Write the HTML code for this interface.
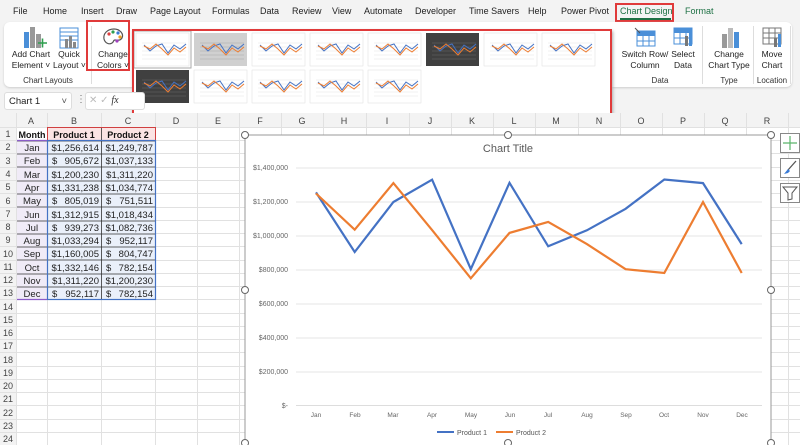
<!DOCTYPE html>
<html><head><meta charset="utf-8"><style>
*{margin:0;padding:0;box-sizing:border-box}
body{width:800px;height:445px;overflow:hidden;background:#fff;font-family:"Liberation Sans",sans-serif;position:relative}
.a{position:absolute}
.tab{position:absolute;top:6px;font-size:9px;color:#222}
.lbl{position:absolute;font-size:8.5px;color:#222;text-align:center;line-height:11px;white-space:nowrap}
.grp{position:absolute;font-size:8px;color:#333;text-align:center;white-space:nowrap}
</style></head><body>
<div class="a" style="left:0;top:0;width:800px;height:113px;background:#f3f3f3"></div>
<span class="tab" style="left:13px">File</span>
<span class="tab" style="left:43px">Home</span>
<span class="tab" style="left:81px">Insert</span>
<span class="tab" style="left:116px">Draw</span>
<span class="tab" style="left:150px">Page Layout</span>
<span class="tab" style="left:212px">Formulas</span>
<span class="tab" style="left:260px">Data</span>
<span class="tab" style="left:292px">Review</span>
<span class="tab" style="left:332px">View</span>
<span class="tab" style="left:364px">Automate</span>
<span class="tab" style="left:415px">Developer</span>
<span class="tab" style="left:469px">Time Savers</span>
<span class="tab" style="left:528px">Help</span>
<span class="tab" style="left:561px">Power Pivot</span>
<div class="a" style="left:615px;top:3px;width:59px;height:19px;border:2px solid #e03a3a"></div>
<span class="tab" style="left:620px;color:#1e7145">Chart Design</span>
<div class="a" style="left:620px;top:18px;width:51px;height:2px;background:#1e7145"></div>
<span class="tab" style="left:685px;color:#1e7145">Format</span>
<div class="a" style="left:4px;top:22px;width:788px;height:65px;background:#fff;border-radius:6px;box-shadow:0 1px 2px #ccc"></div>
<svg class="a" style="left:20px;top:26px" width="30" height="24"><rect x="4" y="6" width="5" height="16" fill="#4a8fd8"/><rect x="10" y="1" width="5" height="21" fill="#999"/><rect x="16" y="8" width="5" height="14" fill="#999"/><path d="M18 17h9M22.5 12.5v9" stroke="#2e9e4e" stroke-width="1.6"/></svg>
<div class="lbl" style="left:7px;top:49px;width:48px">Add Chart<br>Element ˅</div>
<svg class="a" style="left:58px;top:26px" width="24" height="24"><rect x="2" y="2" width="18" height="20" fill="#fff" stroke="#4a8fd8"/><path d="M2 6h18M2 10h18M2 14h18" stroke="#4a8fd8"/><rect x="7" y="13" width="3" height="9" fill="#888"/><rect x="11" y="10" width="3" height="12" fill="#888"/><rect x="15" y="16" width="3" height="6" fill="#888"/></svg>
<div class="lbl" style="left:53px;top:49px;width:32px">Quick<br>Layout ˅</div>
<div class="grp" style="left:8px;top:76px;width:80px">Chart Layouts</div>
<div class="a" style="left:91px;top:26px;width:1px;height:58px;background:#ddd"></div>
<div class="a" style="left:86px;top:20px;width:44px;height:51px;border:2px solid #e03a3a"></div>
<svg class="a" style="left:101px;top:27px" width="26" height="20"><path d="M13 2C6 2 2 7 3 12c1 4 5 6 8 4 2-1 1-3 3-3 3 0 5 1 7-2 2-4-2-9-8-9z" fill="#fff" stroke="#555" stroke-width="1.2"/><circle cx="8" cy="7" r="1.6" fill="#e04040"/><circle cx="12" cy="5" r="1.6" fill="#2e9e4e"/><circle cx="17" cy="6" r="1.6" fill="#3a7bd5"/><circle cx="19" cy="10" r="1.6" fill="#f0a020"/><circle cx="16" cy="14" r="1.6" fill="#a040c0"/></svg>
<div class="lbl" style="left:93px;top:49px;width:40px">Change<br>Colors ˅</div>
<div class="a" style="left:132px;top:29px;width:480px;height:87px;background:#fff;border:2px solid #e03a3a;box-shadow:1px 2px 3px #aaa"></div>
<svg class="a" style="left:134px;top:31px" width="476" height="83">
<defs>
<g id="t"><rect width="53" height="33" fill="#fff" stroke="#ddd" stroke-width=".5"/><path d="M6 10h44M6 14h44M6 18h44M6 22h44M6 26h44" stroke="#e4e4e4" stroke-width=".5"/><polyline points="8,12 14,18 20,13 26,11 32,20 38,12 44,16 50,11" fill="none" stroke="#4472c4" stroke-width="1"/><polyline points="8,13 14,16 20,11 26,16 32,22 38,15 44,19 50,14" fill="none" stroke="#ed7d31" stroke-width="1"/></g>
<g id="d"><rect width="53" height="33" fill="#404040"/><path d="M6 10h44M6 14h44M6 18h44M6 22h44M6 26h44" stroke="#666" stroke-width=".5"/><polyline points="8,12 14,18 20,13 26,11 32,20 38,12 44,16 50,11" fill="none" stroke="#4472c4" stroke-width="1"/><polyline points="8,13 14,16 20,11 26,16 32,22 38,15 44,19 50,14" fill="none" stroke="#ed7d31" stroke-width="1"/></g>
<g id="g"><rect width="53" height="33" fill="#d0d0d0"/><path d="M6 10h44M6 14h44M6 18h44M6 22h44M6 26h44" stroke="#aaa" stroke-width=".5"/><polyline points="8,12 14,18 20,13 26,11 32,20 38,12 44,16 50,11" fill="none" stroke="#4472c4" stroke-width="1"/><polyline points="8,13 14,16 20,11 26,16 32,22 38,15 44,19 50,14" fill="none" stroke="#ed7d31" stroke-width="1"/></g>
</defs>
<rect x="0" y="0" width="57" height="37" fill="none" stroke="#aaa"/>
<use href="#t" x="2" y="2"/><use href="#g" x="60" y="2"/><use href="#t" x="118" y="2"/><use href="#t" x="176" y="2"/><use href="#t" x="234" y="2"/><use href="#d" x="292" y="2"/><use href="#t" x="350" y="2"/><use href="#t" x="408" y="2"/>
<use href="#d" x="2" y="39"/><use href="#t" x="60" y="39"/><use href="#t" x="118" y="39"/><use href="#t" x="176" y="39"/><use href="#t" x="234" y="39"/>
</svg>
<svg class="a" style="left:633px;top:26px" width="24" height="22"><rect x="4" y="5" width="18" height="15" fill="#fff" stroke="#4a8fd8"/><rect x="4" y="5" width="18" height="5" fill="#4a8fd8"/><path d="M10 5v15M16 5v15M4 15h18" stroke="#4a8fd8"/><path d="M2 2l5 5" stroke="#555"/></svg>
<div class="lbl" style="left:621px;top:49px;width:48px">Switch Row/<br>Column</div>
<svg class="a" style="left:672px;top:26px" width="24" height="22"><rect x="2" y="2" width="18" height="16" fill="#fff" stroke="#4a8fd8"/><rect x="2" y="2" width="18" height="5" fill="#4a8fd8"/><path d="M8 2v16M14 2v16M2 12h18" stroke="#4a8fd8"/><rect x="13" y="10" width="3" height="10" fill="#777"/><rect x="17" y="7" width="3" height="13" fill="#4a8fd8"/></svg>
<div class="lbl" style="left:666px;top:49px;width:34px">Select<br>Data</div>
<div class="grp" style="left:620px;top:76px;width:80px">Data</div>
<div class="a" style="left:702px;top:26px;width:1px;height:58px;background:#ddd"></div>
<svg class="a" style="left:718px;top:26px" width="24" height="24"><rect x="4" y="8" width="5" height="14" fill="#999"/><rect x="10" y="2" width="5" height="20" fill="#bbb"/><rect x="16" y="6" width="5" height="16" fill="#4a8fd8"/></svg>
<div class="lbl" style="left:706px;top:49px;width:46px">Change<br>Chart Type</div>
<div class="grp" style="left:706px;top:76px;width:46px">Type</div>
<div class="a" style="left:753px;top:26px;width:1px;height:58px;background:#ddd"></div>
<svg class="a" style="left:761px;top:26px" width="24" height="24"><rect x="2" y="2" width="18" height="16" fill="#fff" stroke="#777"/><path d="M8 2v16M14 2v16M2 7h18M2 12h18" stroke="#777"/><rect x="13" y="12" width="3" height="9" fill="#777"/><rect x="17" y="8" width="3" height="13" fill="#4a8fd8"/></svg>
<div class="lbl" style="left:755px;top:49px;width:34px">Move<br>Chart</div>
<div class="grp" style="left:754px;top:76px;width:36px">Location</div>
<div class="a" style="left:790px;top:26px;width:1px;height:58px;background:#ddd"></div>
<div class="a" style="left:4px;top:92px;width:68px;height:18px;background:#fff;border:1px solid #ddd;border-radius:3px;font-size:9.5px;padding:3px 4px;color:#222">Chart 1<span style="float:right;color:#555">˅</span></div>
<div class="a" style="left:76px;top:94px;font-size:10px;color:#777">⋮</div>
<div class="a" style="left:85px;top:92px;width:60px;height:18px;background:#fff;border:1px solid #ddd;border-radius:3px;font-size:10px;color:#bbb;padding:2px 3px">✕ ✓ <i style="color:#333;font-family:'Liberation Serif'">fx</i></div>
<svg class="a" style="left:0;top:113px" width="800" height="332" font-family="Liberation Sans" font-size="9">
<rect x="0" y="0" width="800" height="14" fill="#f3f3f3"/>
<rect x="0" y="0" width="16" height="332" fill="#f3f3f3"/>
<g stroke="#e1e1e1" stroke-width="1">
<path d="M16.5 0v332M47.5 0v332M101.5 0v332M155.5 0v332M197.5 0v332M239.5 0v332M281.5 0v332M323.5 0v332M366.5 0v332M409.5 0v332M451.5 0v332M493.5 0v332M535.5 0v332M578.5 0v332M620.5 0v332M662.5 0v332M704.5 0v332M746.5 0v332M788.5 0v332"/>
<path d="M0 14.5h800M0 27.5h800M0 40.5h800M0 54.5h800M0 67.5h800M0 80.5h800M0 94.5h800M0 107.5h800M0 120.5h800M0 133.5h800M0 147.5h800M0 160.5h800M0 173.5h800M0 186.5h800M0 200.5h800M0 213.5h800M0 226.5h800M0 239.5h800M0 253.5h800M0 266.5h800M0 279.5h800M0 292.5h800M0 306.5h800M0 319.5h800"/>
</g>
<g fill="#444" text-anchor="middle">
<text x="31" y="11">A</text><text x="74" y="11">B</text><text x="128" y="11">C</text><text x="176" y="11">D</text><text x="218" y="11">E</text><text x="260" y="11">F</text><text x="302" y="11">G</text><text x="344" y="11">H</text><text x="387" y="11">I</text><text x="430" y="11">J</text><text x="472" y="11">K</text><text x="514" y="11">L</text><text x="556" y="11">M</text><text x="599" y="11">N</text><text x="641" y="11">O</text><text x="683" y="11">P</text><text x="725" y="11">Q</text><text x="767" y="11">R</text>
<text x="8" y="24">1</text><text x="8" y="37">2</text><text x="8" y="51">3</text><text x="8" y="64">4</text><text x="8" y="77">5</text><text x="8" y="91">6</text><text x="8" y="104">7</text><text x="8" y="117">8</text><text x="8" y="130">9</text><text x="8" y="144">10</text><text x="8" y="157">11</text><text x="8" y="170">12</text><text x="8" y="183">13</text><text x="8" y="197">14</text><text x="8" y="210">15</text><text x="8" y="223">16</text><text x="8" y="236">17</text><text x="8" y="250">18</text><text x="8" y="263">19</text><text x="8" y="276">20</text><text x="8" y="289">21</text><text x="8" y="303">22</text><text x="8" y="316">23</text><text x="8" y="329">24</text>
</g>
<rect x="17" y="15" width="30" height="13" fill="#fff"/>
<rect x="48" y="15" width="107" height="13" fill="#fbe4e4"/>
<rect x="17" y="28" width="30" height="158" fill="#f0ebf7"/>
<rect x="48" y="28" width="107" height="158" fill="#eaf0fa"/>
<g stroke="#333" stroke-width="0.8"><path d="M17 28h138M17 41h138M17 54h138M17 68h138M17 81h138M17 94h138M17 108h138M17 121h138M17 134h138M17 147h138M17 161h138M17 174h138M101.5 15v171M47.5 15v171"/></g>
<rect x="47.5" y="14.5" width="108" height="13" fill="none" stroke="#d04040" stroke-width="1"/>
<rect x="47.5" y="27.5" width="108" height="159" fill="none" stroke="#4472c4" stroke-width="1.2"/>
<path d="M17 27.5h30M17 186.5h30" stroke="#8a5cc8" stroke-width="1.2"/>
<g font-weight="bold" fill="#111" text-anchor="middle"><text x="32" y="25">Month</text><text x="74" y="25">Product 1</text><text x="128" y="25">Product 2</text></g>
<g fill="#222" text-anchor="middle" font-size="9.5">
<text x="32" y="38">Jan</text><text x="32" y="51">Feb</text><text x="32" y="65">Mar</text><text x="32" y="78">Apr</text><text x="32" y="91">May</text><text x="32" y="105">Jun</text><text x="32" y="118">Jul</text><text x="32" y="131">Aug</text><text x="32" y="144">Sep</text><text x="32" y="158">Oct</text><text x="32" y="171">Nov</text><text x="32" y="184">Dec</text></g>
<g fill="#222" font-size="9.5" text-anchor="end">
<text x="99" y="38">$1,256,614</text><text x="99" y="51">905,672</text><text x="99" y="65">$1,200,230</text><text x="99" y="78">$1,331,238</text><text x="99" y="91">805,019</text><text x="99" y="105">$1,312,915</text><text x="99" y="118">939,273</text><text x="99" y="131">$1,033,294</text><text x="99" y="144">$1,160,005</text><text x="99" y="158">$1,332,146</text><text x="99" y="171">$1,311,220</text><text x="99" y="184">952,117</text>
<text x="153" y="38">$1,249,787</text><text x="153" y="51">$1,037,133</text><text x="153" y="65">$1,311,220</text><text x="153" y="78">$1,034,774</text><text x="153" y="91">751,511</text><text x="153" y="105">$1,018,434</text><text x="153" y="118">$1,082,736</text><text x="153" y="131">952,117</text><text x="153" y="144">804,747</text><text x="153" y="158">782,154</text><text x="153" y="171">$1,200,230</text><text x="153" y="184">782,154</text></g>
<g fill="#222" font-size="9.5"><text x="52" y="51">$</text><text x="52" y="91">$</text><text x="52" y="118">$</text><text x="52" y="184">$</text><text x="106" y="91">$</text><text x="106" y="131">$</text><text x="106" y="144">$</text><text x="106" y="158">$</text><text x="106" y="184">$</text></g>
</svg>
<svg class="a" style="left:0;top:0" width="800" height="445" font-family="Liberation Sans">
<rect x="245" y="135" width="526" height="320" fill="#fff" stroke="#999" stroke-width="1"/>
<g fill="#fff" stroke="#666" stroke-width="1"><circle cx="245" cy="135" r="3.5"/><circle cx="508" cy="135" r="3.5"/><circle cx="771" cy="135" r="3.5"/><circle cx="245" cy="290" r="3.5"/><circle cx="771" cy="290" r="3.5"/><circle cx="245" cy="443" r="3.5"/><circle cx="508" cy="443" r="3.5"/><circle cx="771" cy="443" r="3.5"/></g>
<text x="508" y="152" text-anchor="middle" font-size="11" fill="#595959">Chart Title</text>
<g stroke="#e6e6e6" stroke-width="1"><path d="M296 168h466M296 202h466M296 236h466M296 270h466M296 304h466M296 338h466M296 372h466"/></g>
<path d="M296 405.5h466" stroke="#ddd"/>
<g font-size="7" fill="#666" text-anchor="end"><text x="288" y="170">$1,400,000</text><text x="288" y="204">$1,200,000</text><text x="288" y="238">$1,000,000</text><text x="288" y="272">$800,000</text><text x="288" y="306">$600,000</text><text x="288" y="340">$400,000</text><text x="288" y="374">$200,000</text><text x="288" y="408">$-</text></g>
<g font-size="6.5" fill="#666" text-anchor="middle"><text x="316" y="417">Jan</text><text x="355" y="417">Feb</text><text x="393" y="417">Mar</text><text x="432" y="417">Apr</text><text x="471" y="417">May</text><text x="510" y="417">Jun</text><text x="548" y="417">Jul</text><text x="587" y="417">Aug</text><text x="626" y="417">Sep</text><text x="664" y="417">Oct</text><text x="703" y="417">Nov</text><text x="742" y="417">Dec</text></g>
<polyline fill="none" stroke="#4472c4" stroke-width="2.2" points="316,192.4 354.7,252 393.4,202 432.1,179.7 470.8,269.1 509.5,182.8 548.2,246.3 586.9,230.3 625.6,208.8 664.3,179.5 703,183.1 741.7,244.1"/>
<polyline fill="none" stroke="#ed7d31" stroke-width="2.2" points="316,193.5 354.7,229.7 393.4,183.1 432.1,230.1 470.8,278.3 509.5,232.9 548.2,221.9 586.9,244.1 625.6,269.2 664.3,273 703,202 741.7,273"/>
<path d="M437 432h17" stroke="#4472c4" stroke-width="2"/><text x="457" y="435" font-size="7" fill="#555">Product 1</text>
<path d="M496 432h17" stroke="#ed7d31" stroke-width="2"/><text x="516" y="435" font-size="7" fill="#555">Product 2</text>
<rect x="780.5" y="133.5" width="19" height="19" fill="#fff" stroke="#888"/><path d="M783 143h14M790 136v14" stroke="#5bb56b" stroke-width="1.2"/>
<rect x="780.5" y="158.5" width="19" height="19" fill="#fff" stroke="#888"/><path d="M796 161l-8 9" stroke="#555" stroke-width="1.3"/><path d="M788 169l-4 5 4-1 2-2z" fill="#3a7bd5"/>
<rect x="780.5" y="183.5" width="19" height="19" fill="#fff" stroke="#888"/><path d="M783 187h14l-5 6v6l-4 1v-7z" fill="none" stroke="#555" stroke-width="1"/>
</svg>
</body></html>
